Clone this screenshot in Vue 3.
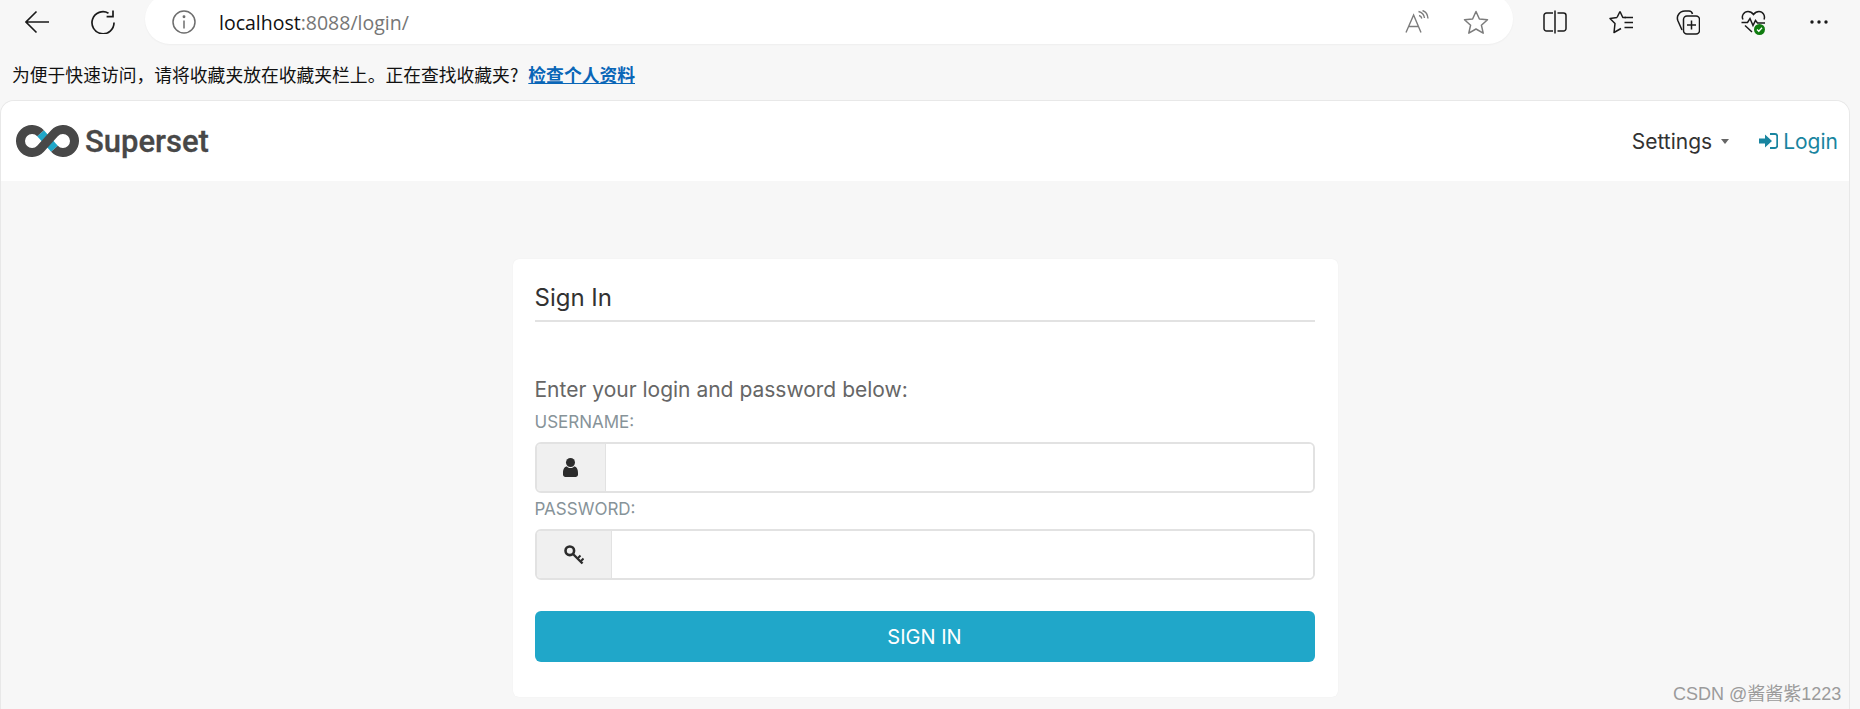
<script setup>
const favText = '为便于快速访问，请将收藏夹放在收藏夹栏上。正在查找收藏夹?'
const fields = [
  { label: 'USERNAME:', type: 'text', icon: 'user', addon: 'addon-user' },
  { label: 'PASSWORD:', type: 'password', icon: 'key', addon: 'addon-key' }
]
</script>

<template>
  <div class="browser">
    <div class="toolbar">
      <svg class="tb-icon back" width="24" height="24" viewBox="0 0 24 24" fill="none" stroke="#1a1a1a" stroke-width="1.6">
        <path d="M24 12H1M11.5 1.5 1 12l10.5 10.5" />
      </svg>
      <svg class="tb-icon reload" width="24" height="24" viewBox="0 0 24 24" fill="none" stroke="#1a1a1a" stroke-width="1.7">
        <path d="M17.5 3.2A11 11 0 1 0 23 12.5" />
        <path d="M22 0.5V6.6H15.6" />
      </svg>
      <div class="address">
        <svg width="24" height="24" viewBox="0 0 24 24" fill="none" stroke="#6e6e6e" stroke-width="1.5">
          <circle cx="12" cy="12" r="11" />
          <path d="M12 10.5V18.5" />
          <circle cx="12" cy="6.8" r="0.7" fill="#6e6e6e" />
        </svg>
        <span class="url"><span class="host">localhost</span>:8088/login/</span>
        <span class="spacer"></span>
        <svg class="read" width="24" height="24" viewBox="0 0 24 24" fill="none" stroke="#7c7c7c" stroke-width="1.4">
          <path d="M1 22.5 8.6 5 16 22.5M3.6 16.5h10" />
          <path d="M13.5 1.5c3.5.8 5.5 3 6 6.5M14 5.5c1.5.4 2.5 1.4 2.8 3M17.5 0.5c3 1 5.2 4 5.5 8" />
        </svg>
        <svg class="star" width="26" height="25" viewBox="0 0 26 25" fill="none" stroke="#7c7c7c" stroke-width="1.5" stroke-linejoin="round">
          <path d="M13 1.5 16.4 9l8.1.8-6.1 5.4 1.8 8-7.2-4.2-7.2 4.2 1.8-8L1.5 9.8 9.6 9Z" />
        </svg>
      </div>
      <svg class="tb-icon split" width="24" height="24" viewBox="0 0 24 24" fill="none" stroke="#1a1a1a" stroke-width="1.5">
        <path d="M10 3H3.5A2.5 2.5 0 0 0 1 5.500V18.500A2.500 2.500 0 0 0 3.500 21H10M12 0.500V23.500M14.500 3H20.500A2.500 2.500 0 0 1 23 5.500V18.500A2.500 2.500 0 0 1 20.500 21H14.500" />
      </svg>
      <svg class="tb-icon favs" width="25" height="24" viewBox="0 0 25 24" fill="none" stroke="#1a1a1a" stroke-width="1.5" stroke-linejoin="round">
        <path d="M11 1.500 13.800 7.500H17M8 7.500 11 1.500M8 7.500 1 8.500 6 13.500 5 22.500 12 18.500" />
        <path d="M15.500 7.500H24M15.500 12.500H24M15.500 17.500H24" />
      </svg>
      <svg class="tb-icon coll" width="24" height="25" viewBox="0 0 24 25" fill="none" stroke="#1a1a1a" stroke-width="1.5">
        <path d="M6 20 2 11C1 8.500 1 6.500 2.500 4.500 4 2 6 1 9 1H13C15 1 16 2 16.500 4" />
        <rect x="7.500" y="6" width="16" height="18" rx="3.500" />
        <path d="M15.500 10.500V19.500M11 15H20" />
      </svg>
      <svg class="tb-icon heart" width="26" height="26" viewBox="0 0 26 26" fill="none" stroke="#1a1a1a" stroke-width="1.5">
        <path d="M2 9.500C0 6 3 1.500 7 1.500 9.500 1.500 11 2.500 12.500 4.500 14 2.500 15.500 1.500 18 1.500 22 1.500 24.500 6 23 9.500" />
        <path d="M0.500 12.500H6.500L9 8.500 12 15.500 14.500 10.500 16.500 13H24M4 15.500 11 22" />
        <circle cx="18.500" cy="19.500" r="5.500" fill="#107c10" stroke="none" />
        <path d="M16 19.500 17.800 21.300 21 17.800" stroke="#fff" stroke-width="1.300" />
      </svg>
      <svg class="tb-icon dots" width="18" height="4" viewBox="0 0 18 4" fill="#1a1a1a">
        <circle cx="2" cy="2" r="1.700" />
        <circle cx="9" cy="2" r="1.700" />
        <circle cx="16" cy="2" r="1.700" />
      </svg>
    </div>

    <div class="favbar">
      <span>{{ favText }}</span>
      <a class="favlink">检查个人资料</a>
    </div>

    <div class="panel">
      <nav class="navbar">
        <div class="brand">
          <svg width="63" height="32" viewBox="0 0 63 32" fill="none" stroke-width="9">
            <path d="M24.530 8.290 38.470 23.710" stroke="#20a7c9" />
            <path d="M24.530 8.290A11.500 11.500 0 1 0 24.530 23.710L38.470 8.290A11.500 11.500 0 1 1 38.470 23.710" stroke="#484848" />
          </svg>
          <span class="brand-name">Superset</span>
        </div>
        <div class="nav-right">
          <span class="settings">Settings</span>
          <span class="caret"></span>
          <svg class="login-icon" width="19" height="16" viewBox="0 0 19 16" fill="#1985a0">
            <path d="M0 5.500H6V1.500L13 8 6 14.500V10.500H0Z" />
            <path d="M11 1H16A2.200 2.200 0 0 1 18.200 3.200V12.800A2.200 2.200 0 0 1 16 15H11" fill="none" stroke="#1985a0" stroke-width="1.800" />
          </svg>
          <a class="login">Login</a>
        </div>
      </nav>

      <main class="content">
        <section class="card">
          <h2 class="card-title">Sign In</h2>
          <p class="hint">Enter your login and password below:</p>
          <div v-for="f in fields" :key="f.label" class="field">
            <label>{{ f.label }}</label>
            <div class="group">
              <span class="addon" :class="f.addon">
                <svg v-if="f.icon === 'user'" width="15" height="19" viewBox="0 0 15 19" fill="#2c2c2c">
                  <circle cx="7.500" cy="4.500" r="4.500" />
                  <path d="M0 15C0 11 1.500 8.500 4 8.500 5 9.500 6 10 7.500 10S10 9.500 11 8.500C13.500 8.500 15 11 15 15V16.500C15 18 14 19 12.500 19H2.500C1 19 0 18 0 16.500Z" />
                </svg>
                <svg v-else width="20" height="20" viewBox="0 0 20 20" fill="none" stroke="#2c2c2c">
                  <circle cx="5.800" cy="5.800" r="4.300" stroke-width="2.600" />
                  <path d="M8.500 8.500 18.500 18.500" stroke-width="2.400" />
                  <path d="M14 13 16.500 10.500M17 16 19.500 13.500" stroke-width="2" />
                </svg>
              </span>
              <input :type="f.type" class="input" />
            </div>
          </div>
          <button class="submit">SIGN IN</button>
        </section>
      </main>
    </div>
    <span class="watermark">CSDN @酱酱紫1223</span>
  </div>
</template>

<style>
html, body { margin: 0; background: #f7f7f7; overflow: hidden; }
</style>

<style scoped>
.browser {
  position: relative;
  width: 1860px;
  height: 709px;
  overflow: hidden;
  background: #f7f7f7;
  font-family: Inter, "Noto Sans CJK SC", sans-serif;
}

.toolbar { display: flex; align-items: flex-start; height: 44px; }
.tb-icon { flex: none; margin-top: 10px; }
.back { margin-left: 25px; }
.reload { margin-left: 42px; }
.split { margin-left: 30px; }
.favs { margin-left: 42px; }
.coll { margin-left: 42px; }
.heart { margin-left: 41px; }
.dots { margin-left: 43px; margin-top: 20px; }

.address {
  flex: none;
  display: flex;
  align-items: center;
  box-sizing: border-box;
  width: 1368px;
  height: 50px;
  margin: -6px 0 0 30px;
  padding: 6px 0 0 27px;
  background: #fff;
  border-radius: 25px;
  box-shadow: 0 1px 2px rgba(0, 0, 0, 0.04);
}
.url {
  margin-left: 23px;
  font-family: "Open Sans", sans-serif;
  font-size: 19.500px;
  color: #767676;
  white-space: nowrap;
}
.host { color: #111; }
.spacer { flex: 1; }
.star { margin-left: 34px; margin-right: 24px; }

.favbar {
  display: flex;
  align-items: center;
  height: 56px;
  padding: 4px 0 0 12px;
  box-sizing: border-box;
  font-family: "Noto Sans CJK SC", sans-serif;
  font-size: 17.800px;
  color: #111;
  white-space: nowrap;
}
.favlink {
  margin-left: 10px;
  font-weight: 700;
  color: #0a66b7;
  text-decoration: underline;
}

.panel {
  box-sizing: border-box;
  width: 1850px;
  height: 609px;
  border: 1px solid #e8e8e8;
  border-bottom: none;
  border-radius: 14px 14px 0 0;
  overflow: hidden;
}
.navbar {
  display: flex;
  align-items: center;
  justify-content: space-between;
  height: 80px;
  background: #fff;
  padding: 0 11px 0 15px;
}
.brand { display: flex; align-items: center; gap: 6px; }
.brand svg { display: block; }
.brand-name {
  font-family: Roboto, sans-serif;
  font-size: 31px;
  font-weight: 500;
  color: #484848;
  -webkit-text-stroke: 0.300px #484848;
}
.nav-right { display: flex; align-items: center; }
.settings { font-size: 21px; color: #323232; }
.caret {
  margin-left: 9px;
  border-left: 4.500px solid transparent;
  border-right: 4.500px solid transparent;
  border-top: 5px solid #666;
}
.login-icon { margin-left: 30px; }
.login { margin-left: 5px; font-size: 21px; color: #1985a0; }

.content {
  display: flex;
  justify-content: center;
  height: 528px;
  background: #f7f7f7;
}
.card {
  box-sizing: border-box;
  width: 825px;
  height: 438px;
  margin-top: 78px;
  padding: 0 23px 0 22px;
  background: #fff;
  border-radius: 6px;
  box-shadow: 0 0 1px rgba(0, 0, 0, 0.08);
}
.card-title {
  margin: 0;
  height: 63px;
  padding-top: 22px;
  box-sizing: border-box;
  border-bottom: 2px solid #e2e2e2;
  font-size: 24px;
  line-height: 34px;
  font-weight: 400;
  color: #323232;
}
.hint {
  margin: 0;
  padding-top: 55px;
  font-size: 21px;
  line-height: 26px;
  color: #666;
}
.field { display: flex; flex-direction: column; }
.field label {
  height: 39px;
  line-height: 29px;
  font-size: 17px;
  color: #879399;
}
.field + .field label { height: 36px; line-height: 32px; }
.field:first-of-type label { line-height: 38px; }
.group {
  display: flex;
  height: 51px;
  box-sizing: border-box;
  border: 2px solid #e2e2e2;
  border-radius: 6px;
  overflow: hidden;
}
.addon {
  flex: none;
  display: flex;
  align-items: center;
  justify-content: center;
  box-sizing: border-box;
  background: #f0f0f0;
  border-right: 1px solid #e2e2e2;
}
.addon-user { width: 69px; }
.addon-key { width: 75px; }
.input {
  flex: 1;
  min-width: 0;
  border: none;
  outline: none;
  background: #fff;
}
.submit {
  display: block;
  width: 100%;
  height: 51px;
  margin-top: 31px;
  border: none;
  border-radius: 6px;
  background: #20a7c9;
  color: #fff;
  font-family: Inter, sans-serif;
  font-size: 20px;
}

.watermark {
  position: absolute;
  left: 1673px;
  top: 679px;
  font-family: "Liberation Sans", "Noto Sans CJK SC", sans-serif;
  font-size: 18px;
  color: #9b9b9b;
  white-space: nowrap;
}
</style>
